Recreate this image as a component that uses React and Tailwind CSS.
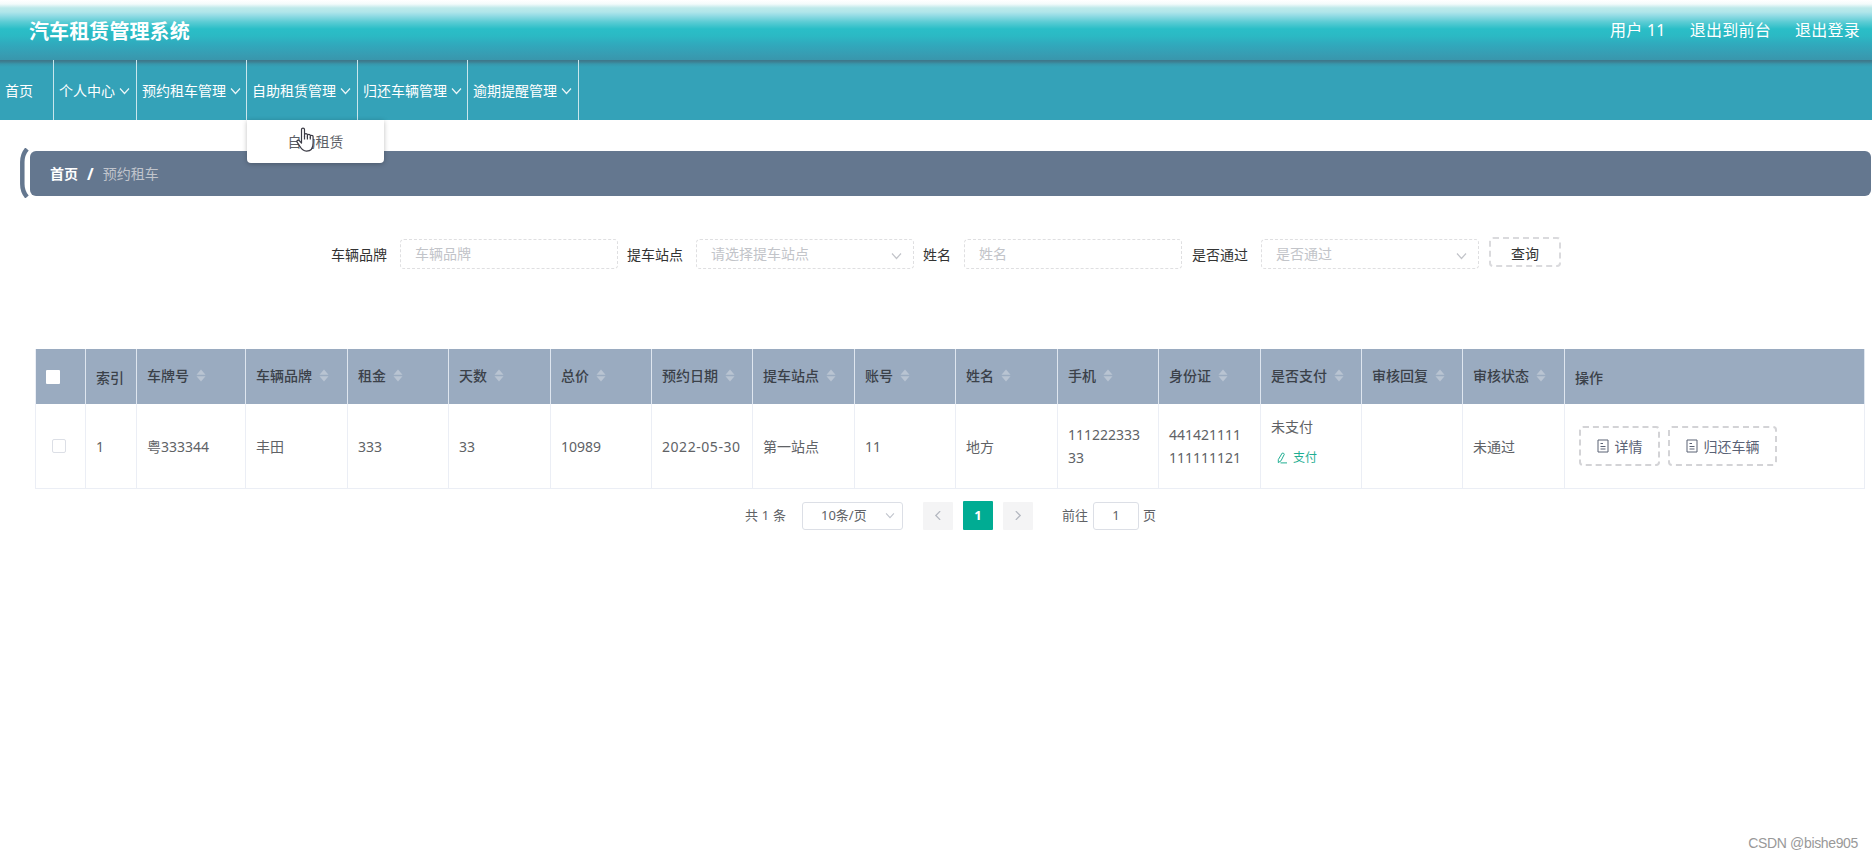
import clsx from 'clsx';

const MENU = [
  { label: '首页', width: 'w-[54px]' },
  { label: '个人中心', width: 'w-[83px]', children: true },
  { label: '预约租车管理', width: 'w-[110px]', children: true },
  { label: '自助租赁管理', width: 'w-[111px]', children: true, open: true, sub: '自助租赁' },
  { label: '归还车辆管理', width: 'w-[110px]', children: true },
  { label: '逾期提醒管理', width: 'w-[111px]', children: true },
];

const COLUMNS = [
  { title: '车牌号', value: '粤333344' },
  { title: '车辆品牌', value: '丰田' },
  { title: '租金', value: '333' },
  { title: '天数', value: '33' },
  { title: '总价', value: '10989' },
  { title: '预约日期', value: '2022-05-30', date: true },
  { title: '提车站点', value: '第一站点' },
  { title: '账号', value: '11' },
  { title: '姓名', value: '地方' },
  { title: '手机', value: '11122233333' },
  { title: '身份证', value: '441421111111111121' },
  { title: '是否支付', value: '未支付', pay: true },
  { title: '审核回复', value: '' },
  { title: '审核状态', value: '未通过' },
];

const GRID = 'grid grid-cols-[50px_51px_109px_102px_101px_102px_101px_101px_102px_101px_102px_101px_102px_101px_101px_102px_300px]';

function Chevron({ className, d = 'M1 1.5 5.5 6.5 10 1.5' }) {
  return (
    <svg viewBox="0 0 11 8" className={clsx('shrink-0', className)} fill="none" stroke="currentColor" strokeWidth="1.2">
      <path d={d} />
    </svg>
  );
}

function SortCaret() {
  return (
    <svg width="10" height="13" viewBox="0 0 10 13" className="ml-[7px] text-[#b9c4d2]" fill="currentColor">
      <path d="M5 0.5 9.5 5.7h-9z" />
      <path d="M5 12.5 9.5 7.3h-9z" />
    </svg>
  );
}

function DocIcon() {
  return (
    <svg width="12" height="14" viewBox="0 0 12 14" fill="none" stroke="currentColor" strokeWidth="1">
      <path d="M1 1h10v12H1z" />
      <path d="M3.5 4.5h2.5M3.5 7.5h5M3.5 10h5" />
    </svg>
  );
}

function EditIcon() {
  return (
    <svg width="10" height="12" viewBox="0 0 10 12" fill="none" stroke="currentColor" strokeWidth="1">
      <path d="M5.2 1.1Q7 .8 7.3 2.3L4 8.8 1.3 10.6 1.3 7.6z" />
      <path d="M3.5 10.9h6.5" />
    </svg>
  );
}

function HandCursor() {
  return (
    <svg width="19" height="26" viewBox="0 0 19 26" className="absolute left-[49px] top-[7px]" fill="#fff" stroke="#3a3a44" strokeWidth="1.2" strokeLinejoin="round">
      <path d="M5.5 16V2.6C5.5 .5 8.5 .5 8.5 2.6V9.5 7.9c0-1.7 2.9-1.7 2.9 0v2-1.3c0-1.7 2.9-1.6 2.9 .1v1.6-.8c0-1.6 2.8-1.5 2.8 .1v6.1c0 5.3-2.3 8.4-6.6 8.4-3.6 0-5-1.8-6.6-4.8L1.1 15.2c-.9-1.7 1.2-2.7 2.4-1.4z" />
      <path d="M8.5 9v3.5M11.4 9.5v3M14.3 10v2.5" />
    </svg>
  );
}

function Field({ label, placeholder, select, className }) {
  return (
    <div className={clsx('flex items-center', className)}>
      <span className="pt-0.5 leading-5 text-[#333]">{label}</span>
      <div className="ml-[13px] flex h-[30px] w-[218px] items-center justify-between rounded border border-dashed border-[#dfdfe1] pl-[14px] pr-[11px] text-[#c2c4c9]">
        <span className="leading-5">{placeholder}</span>
        {select && <Chevron className="mt-1 h-2 w-[11px]" />}
      </div>
    </div>
  );
}

function HeadCell({ title, sortable = true }) {
  return (
    <div className={clsx('flex items-center border-r border-[#dfe6ef] pl-[10px] font-medium text-[#3b4149]', sortable ? 'pb-0.5' : 'pt-0.5')}>
      {title}
      {sortable && <SortCaret />}
    </div>
  );
}

function ActionButton({ children, className }) {
  return (
    <button className={clsx('flex h-10 items-center justify-center gap-[6px] rounded border-2 border-dashed border-[#d3d3d6] text-[#5a6275]', className)}>
      <DocIcon />
      {children}
    </button>
  );
}

function Header() {
  return (
    <header className="flex h-[60px] items-center justify-between bg-[linear-gradient(180deg,#fff_0px,#f3fbfb_4px,#bce9ea_8px,#b0e6ea_12px,#98dde6_15px,#5bccd4_22px,#2abec7_29px,#2bb9c4_36px,#30aabd_44px,#379db3_54px,#3996ac_60px)] pl-[29px] pr-3 text-white">
      <h1 className="pt-[3px] text-xl font-bold leading-6 tracking-[0.1px]">汽车租赁管理系统</h1>
      <div className="flex gap-6 text-base tracking-[0.25px]">
        <span>用户 11</span>
        <span>退出到前台</span>
        <span>退出登录</span>
      </div>
    </header>
  );
}

function NavBar() {
  return (
    <nav className="flex h-[60px] bg-[linear-gradient(180deg,#3d7588_0px,#3d8194_2px,#3797ac_4px,#34a2b8_7px)] text-white">
      {MENU.map((item) => (
        <div key={item.label} className={clsx('relative flex items-center border-r border-[#c9e6ec] pl-[5px] pt-px', item.width)}>
          <span className="whitespace-nowrap">{item.label}</span>
          {item.children && <Chevron className="ml-1 h-2 w-[11px] opacity-90" />}
          {item.open && (
            <div className="absolute left-0 top-[60px] z-10 flex h-[43px] w-[137px] items-center justify-center rounded-b bg-white text-[#5c5f66] shadow-[0_1px_5px_rgba(0,0,0,0.25)]">
              {item.sub}
              <HandCursor />
            </div>
          )}
        </div>
      ))}
    </nav>
  );
}

function Breadcrumb() {
  return (
    <div className="mt-7 flex items-center pl-5">
      <svg width="10" height="50" viewBox="0 0 10 50" fill="none" stroke="#64778f" strokeWidth="4.5">
        <path d="M7 1C3.5 5 2.3 9 2.3 14v22c0 5 1.2 9 4.7 13" />
      </svg>
      <div className="flex h-[45px] w-[1841px] items-center rounded-md bg-[#64778f] pl-5 pt-0.5">
        <b className="text-white">首页</b>
        <b className="mx-[9px] text-base text-white">/</b>
        <span className="text-[#c0c4cc]">预约租车</span>
      </div>
    </div>
  );
}

function Filters() {
  return (
    <div className="mt-[39px] flex h-[34px] pl-[331px]">
      <Field label="车辆品牌" placeholder="车辆品牌" />
      <Field label="提车站点" placeholder="请选择提车站点" select className="ml-[9px]" />
      <Field label="姓名" placeholder="姓名" className="ml-[9px]" />
      <Field label="是否通过" placeholder="是否通过" select className="ml-[10px]" />
      <button className="ml-[10px] h-[30px] w-[72px] rounded border-2 border-dashed border-[#dadadd] pt-1 leading-5 text-[#333]">查询</button>
    </div>
  );
}

function OrderTable() {
  return (
    <div className="ml-[35px] mt-[78px] w-[1830px] border-l border-[#ebeef5]">
      <div className={clsx(GRID, 'h-[55px] bg-[#9aabc0]')}>
        <div className="flex items-center border-r border-[#dfe6ef] pl-[10px]">
          <span className="h-[14px] w-[14px] rounded-[1px] bg-white" />
        </div>
        <HeadCell title="索引" sortable={false} />
        {COLUMNS.map((c) => <HeadCell key={c.title} title={c.title} />)}
        <HeadCell title="操作" sortable={false} />
      </div>
      <div className={clsx(GRID, 'h-[85px] border-b border-[#ebeef5] leading-[23px] text-[#606266]')}>
        <div className="flex items-center border-r border-[#ebeef5] pl-4">
          <span className="h-[14px] w-[14px] rounded-[2px] border border-[#dcdfe6]" />
        </div>
        <div className="flex items-center border-r border-[#ebeef5] pl-[10px]">1</div>
        {COLUMNS.map((c) => (
          <div key={c.title} className={clsx('flex flex-col justify-center border-r border-[#ebeef5] pl-[10px] pr-3', c.pay && 'pb-2')}>
            <span className={clsx(c.date ? 'whitespace-nowrap tracking-[0.55px]' : 'break-all')}>{c.value}</span>
            {c.pay && (
              <span className="mt-2 flex items-center gap-[6px] pl-[6px] text-xs leading-[23px] text-[#1fae92]">
                <EditIcon />
                支付
              </span>
            )}
          </div>
        ))}
        <div className="flex items-center gap-2 border-r border-[#ebeef5] pl-[14px]">
          <ActionButton className="w-[81px]">详情</ActionButton>
          <ActionButton className="w-[109px]">归还车辆</ActionButton>
        </div>
      </div>
    </div>
  );
}

function Pagination() {
  return (
    <div className="mt-3 flex items-center pl-[745px] text-[13px] text-[#606266]">
      <span className="w-[57px] tracking-[0.2px]">共 1 条</span>
      <div className="flex h-7 w-[101px] items-center justify-between rounded-[3px] border border-[#dcdfe6] pl-[18px] pr-[7px]">
        <span>10条/页</span>
        <Chevron className="h-[7px] w-[10px] text-[#c0c4cc]" />
      </div>
      <div className="ml-5 flex h-7 w-[30px] items-center justify-center rounded-[1px] bg-[#f4f4f5] text-[#b4b8c0]">
        <Chevron d="M7.5 0 3.5 4 7.5 8" className="h-[9px] w-3" />
      </div>
      <div className="ml-[10px] flex h-[29px] w-[30px] items-center justify-center rounded-[1px] bg-[#00ac93] font-bold text-white">1</div>
      <div className="ml-[10px] flex h-7 w-[30px] items-center justify-center rounded-[1px] bg-[#f4f4f5] text-[#b4b8c0]">
        <Chevron d="M3.5 0 7.5 4 3.5 8" className="h-[9px] w-3" />
      </div>
      <span className="ml-[29px]">前往</span>
      <div className="ml-[5px] flex h-7 w-[46px] items-center justify-center rounded-[3px] border border-[#dcdfe6]">1</div>
      <span className="ml-1">页</span>
    </div>
  );
}

export default function App() {
  return (
    <div className="flex h-[857px] w-[1872px] flex-col overflow-hidden bg-white font-['Noto_Sans','Noto_Sans_CJK_SC',sans-serif] text-sm">
      <Header />
      <NavBar />
      <Breadcrumb />
      <Filters />
      <OrderTable />
      <Pagination />
      <footer className="mt-auto pb-1 pr-[14px] text-right font-['Liberation_Sans',sans-serif] text-sm tracking-[-0.35px] text-[#999]">CSDN @bishe905</footer>
    </div>
  );
}
